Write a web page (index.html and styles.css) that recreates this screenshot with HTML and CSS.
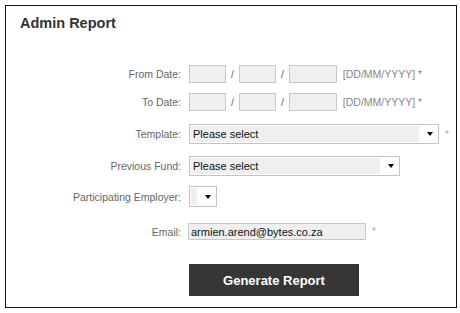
FILE: index.html
```html
<!DOCTYPE html>
<html lang="en">
<head>
    <meta charset="UTF-8">
    <title>Admin Report</title>
    <link rel="stylesheet" href="styles.css">
</head>
<body>
    <div class="panel">
        <h1>Admin Report</h1>
        <form class="report-form">
            <div class="row first">
                <label class="label">From Date:</label>
                <div class="field">
                    <input type="text" class="date dd">
                    <span class="slash">/</span>
                    <input type="text" class="date mm">
                    <span class="slash">/</span>
                    <input type="text" class="date yyyy">
                    <span class="hint">[DD/MM/YYYY] *</span>
                </div>
            </div>
            <div class="row">
                <label class="label">To Date:</label>
                <div class="field">
                    <input type="text" class="date dd">
                    <span class="slash">/</span>
                    <input type="text" class="date mm">
                    <span class="slash">/</span>
                    <input type="text" class="date yyyy">
                    <span class="hint">[DD/MM/YYYY] *</span>
                </div>
            </div>
            <div class="row template">
                <label class="label">Template:</label>
                <div class="field">
                    <span class="select wide"><select><option>Please select</option></select></span>
                    <span class="required">*</span>
                </div>
            </div>
            <div class="row fund">
                <label class="label">Previous Fund:</label>
                <div class="field">
                    <span class="select medium"><select><option>Please select</option></select></span>
                </div>
            </div>
            <div class="row employer">
                <label class="label">Participating Employer:</label>
                <div class="field">
                    <span class="select tiny"><select><option></option></select></span>
                </div>
            </div>
            <div class="row email">
                <label class="label">Email:</label>
                <div class="field">
                    <input type="text" class="text-input" value="armien.arend@bytes.co.za">
                    <span class="required">*</span>
                </div>
            </div>
            <div class="actions">
                <button type="button">Generate Report</button>
            </div>
        </form>
    </div>
</body>
</html>
```

FILE: styles.css
```css
body {
    margin: 0;
    padding: 5px;
    background-color: #fff;
    font-family: "Liberation Sans", Arial, sans-serif;
}
.panel {
    width: 450px;
    height: 301px;
    border: 1px solid #111;
}
h1 {
    margin: 0;
    padding: 8px 14px 0;
    font-size: 14.5px;
    line-height: 18px;
    font-weight: bold;
    color: #333;
}
.row {
    display: flex;
    align-items: center;
    margin-top: 10px;
}
.row.first {
    margin-top: 33px;
}
.row.template {
    margin-top: 13px;
}
.row.fund {
    margin-top: 12px;
}
.row.email {
    margin-top: 16px;
}
.label {
    width: 175px;
    margin-right: 8px;
    text-align: right;
    font-size: 10.5px;
    color: #666;
}
.field {
    display: flex;
    align-items: center;
    font-size: 10.5px;
}
.date {
    box-sizing: border-box;
    height: 18px;
    margin: 0;
    padding: 0 2px;
    border: 1px solid #c8c8c8;
    background-color: #efefef;
    font-size: 11px;
}
.date.dd, .date.mm {
    width: 37px;
}
.date.yyyy {
    width: 48px;
}
.slash {
    margin: 0 5px;
    color: #666;
}
.hint {
    margin-left: 6px;
    color: #888;
}
.required {
    margin-left: 6px;
    color: #aaa;
    font-size: 10px;
}
.select {
    position: relative;
    display: inline-block;
    box-sizing: border-box;
    height: 20px;
    padding: 1px;
    border: 1px solid #c4c4c4;
    background-color: #fff;
}
.select select {
    -webkit-appearance: none;
    appearance: none;
    display: block;
    width: calc(100% - 18px);
    height: 16px;
    margin: 0;
    padding: 0 2px;
    border: none;
    border-radius: 0;
    background-color: #efefef;
    font-family: "Liberation Sans", Arial, sans-serif;
    font-size: 11px;
    color: #111;
    outline: none;
}
.select::after {
    content: '';
    position: absolute;
    right: 5px;
    top: 50%;
    margin-top: -2px;
    border-left: 3.5px solid transparent;
    border-right: 3.5px solid transparent;
    border-top: 4px solid #000;
}
.select.wide {
    width: 250px;
}
.select.medium {
    width: 211px;
}
.select.tiny {
    width: 28px;
    height: 21px;
}
.select.tiny select {
    height: 17px;
}
.text-input {
    box-sizing: border-box;
    width: 178px;
    height: 17px;
    margin: 0 0 0 -1px;
    padding: 0 2px;
    border: 1px solid #c8c8c8;
    background-color: #efefef;
    font-family: "Liberation Sans", Arial, sans-serif;
    font-size: 11px;
    color: #111;
}
.actions {
    margin-top: 24px;
    padding-left: 183px;
}
.actions button {
    width: 170px;
    height: 32px;
    border: none;
    background-color: #363636;
    color: #fff;
    font-family: "Liberation Sans", Arial, sans-serif;
    font-size: 13px;
    font-weight: bold;
    cursor: pointer;
}
```
